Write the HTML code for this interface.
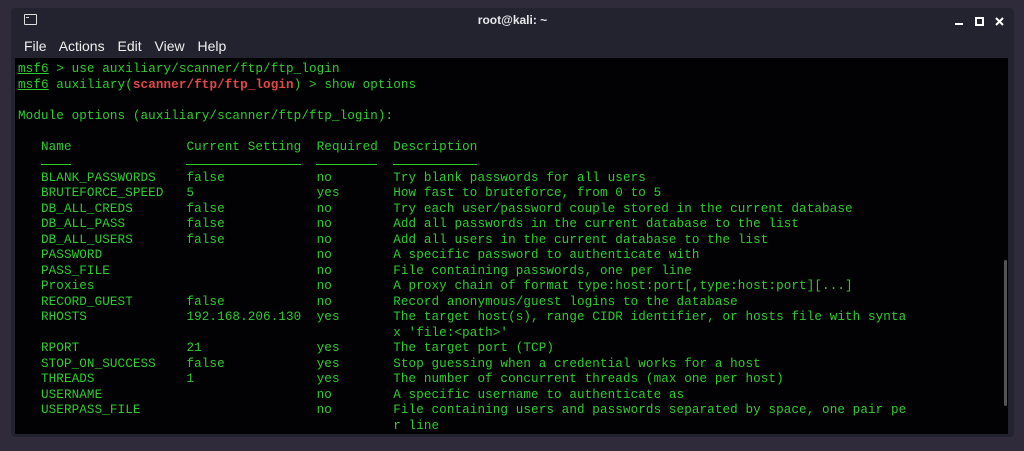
<!DOCTYPE html>
<html><head><style>
body{margin:0;width:1024px;height:451px;background:#2f2b3a;overflow:hidden;font-family:"Liberation Sans",sans-serif}
.win{position:absolute;left:11px;top:8px;width:1003px;height:429px;background:#22232e;border-radius:4px}
.title{position:absolute;left:0;width:1003px;top:5px;text-align:center;color:#e8e8ec;font-size:12px;font-weight:bold}
.menu{position:absolute;left:13px;top:30px;color:#f0f0f0;font-size:14px;word-spacing:0}
.menu span{margin-right:9px}
.term{position:absolute;left:15px;top:58px;width:993px;height:376px;background:#020104}
.sb{position:absolute;left:1004px;top:260px;width:3px;height:146px;background:#555;border-radius:2px}
pre{position:absolute;left:18px;top:62px;margin:0;font-family:"Liberation Mono",monospace;font-size:12.6px;letter-spacing:0.1px;line-height:15.5px;color:#2fcc2f}
u{text-decoration:underline}
.r{color:#e24848;font-weight:bold}
.d{display:inline-block;border-bottom:1px solid #2fcc2f;height:9px;vertical-align:top}
</style></head><body>
<div class="win">
<div style="position:absolute;left:13px;top:6px;width:11px;height:9px;border:1px solid #ddd;border-radius:1px"></div>
<div style="position:absolute;left:15px;top:9px;width:3px;height:1px;background:#ddd"></div>
<div class="title">root@kali: ~</div>
<div style="position:absolute;left:944px;top:15px;width:8px;height:2px;background:#fff"></div>
<div style="position:absolute;left:964px;top:9px;width:5px;height:5px;border:2px solid #fff"></div>
<svg style="position:absolute;left:984px;top:9px" width="9" height="9"><path d="M1 1L8 8M8 1L1 8" stroke="#fff" stroke-width="2"/></svg>
<div class="menu"><span>File</span> <span>Actions</span> <span>Edit</span> <span>View</span> <span>Help</span></div>
</div>
<div class="term"></div>
<div class="sb"></div>
<pre><u>msf6</u> &gt; use auxiliary/scanner/ftp/ftp_login
<u>msf6</u> auxiliary(<span class="r">scanner/ftp/ftp_login</span>) &gt; show options

Module options (auxiliary/scanner/ftp/ftp_login):

   Name               Current Setting  Required  Description
   <span class="d" style="width:30px"></span>               <span class="d" style="width:115px"></span>  <span class="d" style="width:61px"></span>  <span class="d" style="width:84px"></span>
   BLANK_PASSWORDS    false            no        Try blank passwords for all users
   BRUTEFORCE_SPEED   5                yes       How fast to bruteforce, from 0 to 5
   DB_ALL_CREDS       false            no        Try each user/password couple stored in the current database
   DB_ALL_PASS        false            no        Add all passwords in the current database to the list
   DB_ALL_USERS       false            no        Add all users in the current database to the list
   PASSWORD                            no        A specific password to authenticate with
   PASS_FILE                           no        File containing passwords, one per line
   Proxies                             no        A proxy chain of format type:host:port[,type:host:port][...]
   RECORD_GUEST       false            no        Record anonymous/guest logins to the database
   RHOSTS             192.168.206.130  yes       The target host(s), range CIDR identifier, or hosts file with synta
                                                 x 'file:&lt;path&gt;'
   RPORT              21               yes       The target port (TCP)
   STOP_ON_SUCCESS    false            yes       Stop guessing when a credential works for a host
   THREADS            1                yes       The number of concurrent threads (max one per host)
   USERNAME                            no        A specific username to authenticate as
   USERPASS_FILE                       no        File containing users and passwords separated by space, one pair pe
                                                 r line</pre>
</body></html>
